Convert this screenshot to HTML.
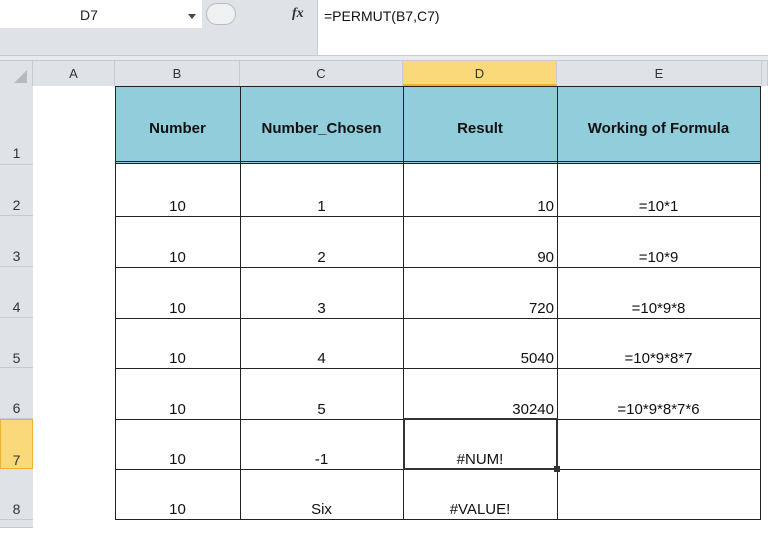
<!DOCTYPE html><html><head><style>
body{margin:0;width:768px;height:528px;overflow:hidden;background:#fff;font-family:"Liberation Sans",sans-serif;position:relative}
div{position:absolute;box-sizing:border-box}
.ch{top:61px;height:25px;background:#dfe3e8;border-right:1px solid #c6cbd1;text-align:center;font-size:13px;line-height:25px;color:#333}
.rh{left:0;width:33px;background:#dfe3e8;border-bottom:1px solid #c6cbd1;font-size:14px;color:#333;text-align:center}
.c{font-size:15px;color:#111;text-align:center;margin-top:3px}
.h{font-weight:bold;font-size:15px;text-align:center;color:#111;margin-top:3px}
</style></head><body>
<div style="left:0;top:0;width:768px;height:58px;background:#dfe3e8"></div>
<div style="left:0;top:0;width:202px;height:28px;background:#fff;font-size:14px;line-height:30px;padding-left:80px;color:#222">D7</div>
<div style="left:188px;top:14px;width:0;height:0;border-left:4px solid transparent;border-right:4px solid transparent;border-top:5px solid #444"></div>
<div style="left:206px;top:3px;width:30px;height:22px;border:1px solid #b8bcc2;border-radius:11px;background:#eef0f2"></div>
<div style="left:292px;top:6px;font-family:'Liberation Serif',serif;font-style:italic;font-weight:bold;font-size:14px;color:#333">fx</div>
<div style="left:317px;top:0;width:451px;height:55px;background:#fff;border-left:1px solid #c6cbd1;font-size:14px;padding:8px 0 0 6px;color:#111">=PERMUT(B7,C7)</div>
<div style="left:0;top:55px;width:768px;height:6px;background:#e8eaed;border-top:1px solid #c6cbd1;border-bottom:1px solid #c6cbd1"></div>
<div class="ch" style="left:0;width:33px"></div>
<div style="left:14px;top:70px;width:0;height:0;border-left:13px solid transparent;border-bottom:13px solid #b5bac0"></div>
<div class="ch" style="left:33px;width:82px">A</div>
<div class="ch" style="left:115px;width:125px">B</div>
<div class="ch" style="left:240px;width:163px">C</div>
<div class="ch" style="left:403px;width:154px;background:#f9d97a;border-bottom:2px solid #f0b030">D</div>
<div class="ch" style="left:557px;width:205px">E</div>
<div class="ch" style="left:762px;width:6px"></div>
<div style="left:762px;top:86px;width:6px;height:442px;background:#fff"></div>
<div class="rh" style="top:86px;height:79px;line-height:134px">1</div>
<div class="rh" style="top:165px;height:51px;line-height:80px">2</div>
<div class="rh" style="top:216px;height:51px;line-height:80px">3</div>
<div class="rh" style="top:267px;height:51px;line-height:80px">4</div>
<div class="rh" style="top:318px;height:50px;line-height:80px">5</div>
<div class="rh" style="top:368px;height:51px;line-height:80px">6</div>
<div class="rh" style="top:419px;height:50px;line-height:80px;background:#f9d97a;border:1px solid #f0b030">7</div>
<div class="rh" style="top:469px;height:51px;line-height:80px">8</div>
<div class="rh" style="top:520px;height:8px"></div>
<div style="left:115px;top:86px;width:646px;height:78px;background:#92cddc;border:1px solid #222;border-bottom:3px double #222"></div>
<div style="left:240px;top:86px;width:1px;height:434px;background:#222"></div>
<div style="left:403px;top:86px;width:1px;height:434px;background:#222"></div>
<div style="left:557px;top:86px;width:1px;height:434px;background:#222"></div>
<div style="left:115px;top:86px;width:1px;height:434px;background:#222"></div>
<div style="left:760px;top:86px;width:1px;height:434px;background:#222"></div>
<div class="h" style="left:115px;top:117px;width:125px">Number</div>
<div class="h" style="left:240px;top:117px;width:163px">Number_Chosen</div>
<div class="h" style="left:403px;top:117px;width:154px">Result</div>
<div class="h" style="left:557px;top:117px;width:203px">Working of Formula</div>
<div style="left:115px;top:216px;width:646px;height:1px;background:#222"></div>
<div style="left:115px;top:267px;width:646px;height:1px;background:#222"></div>
<div style="left:115px;top:318px;width:646px;height:1px;background:#222"></div>
<div style="left:115px;top:368px;width:646px;height:1px;background:#222"></div>
<div style="left:115px;top:419px;width:646px;height:1px;background:#222"></div>
<div style="left:115px;top:469px;width:646px;height:1px;background:#222"></div>
<div style="left:115px;top:519px;width:646px;height:1px;background:#222"></div>
<div style="left:403px;top:418px;width:155px;height:52px;border:2px solid #333"></div>
<div style="left:554px;top:466px;width:6px;height:6px;background:#333"></div>

<div class="c" style="left:115px;top:195px;width:125px">10</div><div class="c" style="left:240px;top:195px;width:163px">1</div><div class="c" style="left:403px;top:195px;width:151px;text-align:right">10</div><div class="c" style="left:557px;top:195px;width:203px">=10*1</div>
<div class="c" style="left:115px;top:246px;width:125px">10</div><div class="c" style="left:240px;top:246px;width:163px">2</div><div class="c" style="left:403px;top:246px;width:151px;text-align:right">90</div><div class="c" style="left:557px;top:246px;width:203px">=10*9</div>
<div class="c" style="left:115px;top:297px;width:125px">10</div><div class="c" style="left:240px;top:297px;width:163px">3</div><div class="c" style="left:403px;top:297px;width:151px;text-align:right">720</div><div class="c" style="left:557px;top:297px;width:203px">=10*9*8</div>
<div class="c" style="left:115px;top:347px;width:125px">10</div><div class="c" style="left:240px;top:347px;width:163px">4</div><div class="c" style="left:403px;top:347px;width:151px;text-align:right">5040</div><div class="c" style="left:557px;top:347px;width:203px">=10*9*8*7</div>
<div class="c" style="left:115px;top:398px;width:125px">10</div><div class="c" style="left:240px;top:398px;width:163px">5</div><div class="c" style="left:403px;top:398px;width:151px;text-align:right">30240</div><div class="c" style="left:557px;top:398px;width:203px">=10*9*8*7*6</div>
<div class="c" style="left:115px;top:448px;width:125px">10</div><div class="c" style="left:240px;top:448px;width:163px">-1</div><div class="c" style="left:403px;top:448px;width:154px">#NUM!</div>
<div class="c" style="left:115px;top:498px;width:125px">10</div><div class="c" style="left:240px;top:498px;width:163px">Six</div><div class="c" style="left:403px;top:498px;width:154px">#VALUE!</div>
</body></html>
